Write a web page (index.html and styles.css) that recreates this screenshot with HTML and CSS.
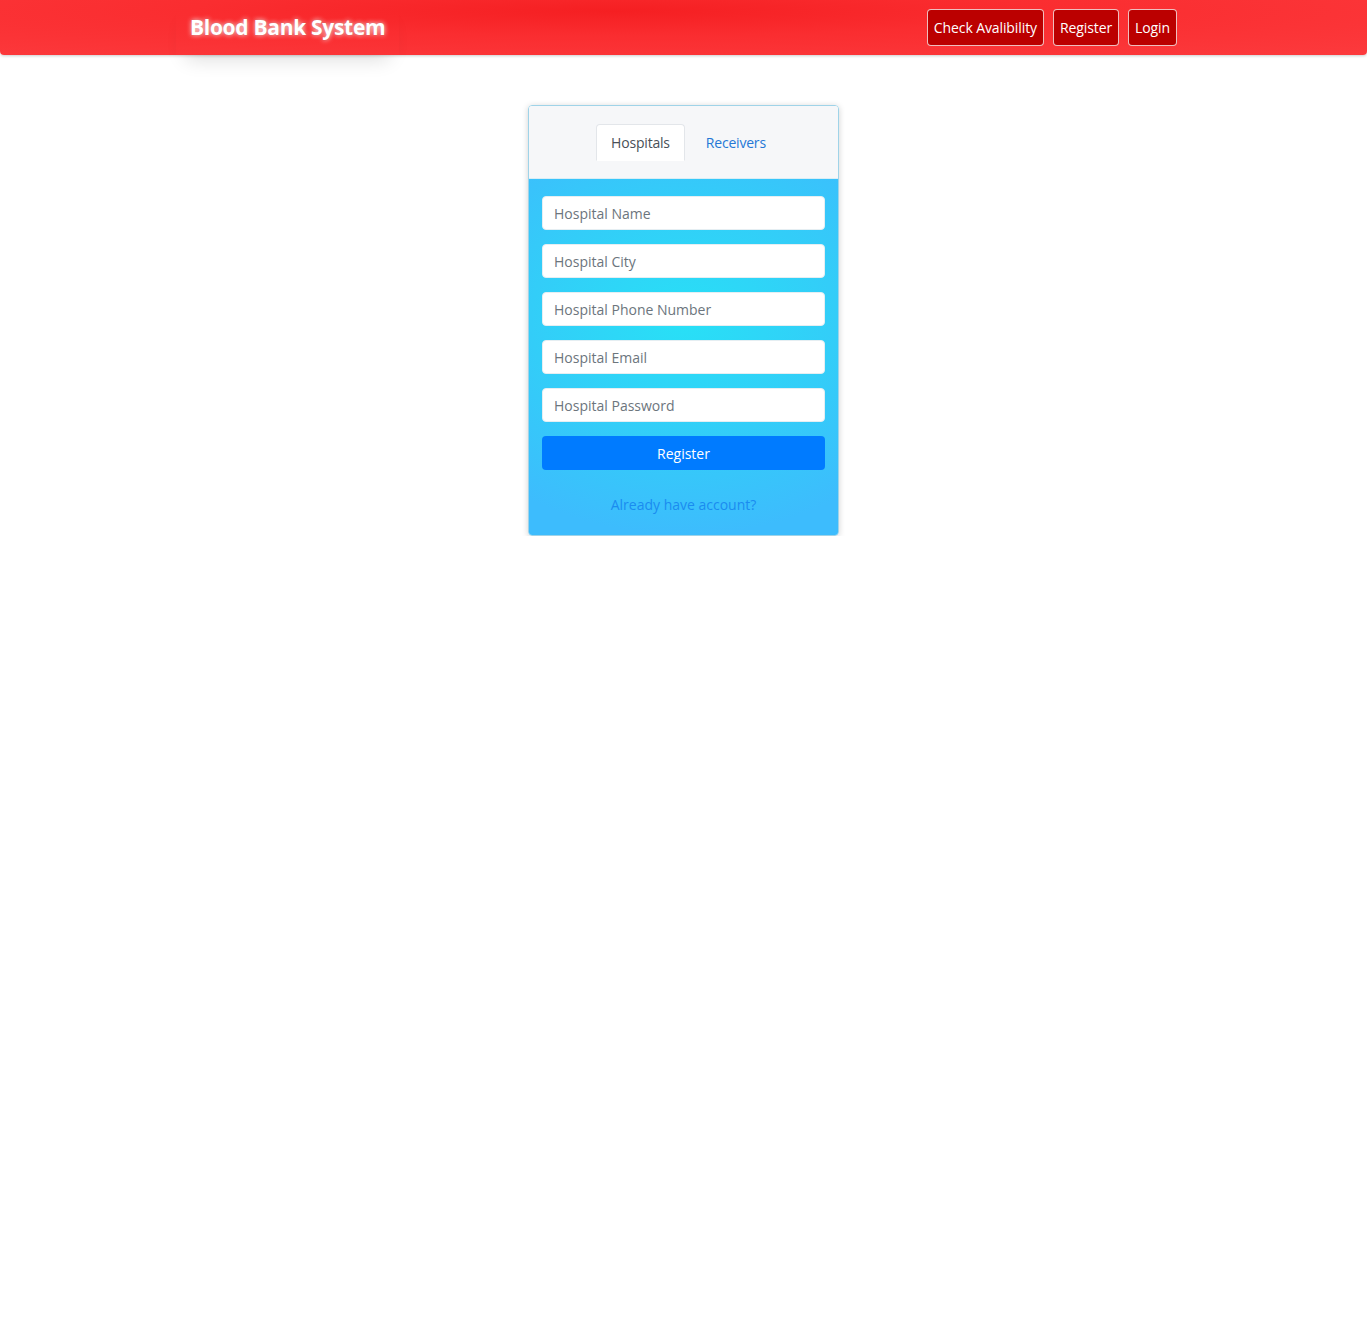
FILE: index.html
```html
<!DOCTYPE html>
<html lang="en">
<head>
<meta charset="utf-8">
<title>Blood Bank System</title>
<link rel="stylesheet" href="styles.css">
</head>
<body>
<nav class="navbar">
  <a class="brand" href="#">Blood Bank System</a>
  <div class="nav-actions">
    <a class="nav-btn" href="#">Check Avalibility</a>
    <a class="nav-btn" href="#">Register</a>
    <a class="nav-btn" href="#">Login</a>
  </div>
</nav>
<main class="page">
  <section class="card">
    <header class="card-header">
      <ul class="tabs">
        <li><a class="tab active" href="#">Hospitals</a></li>
        <li><a class="tab" href="#">Receivers</a></li>
      </ul>
    </header>
    <form class="card-body">
      <input class="field" type="text" placeholder="Hospital Name">
      <input class="field" type="text" placeholder="Hospital City">
      <input class="field" type="text" placeholder="Hospital Phone Number">
      <input class="field" type="email" placeholder="Hospital Email">
      <input class="field" type="password" placeholder="Hospital Password">
      <button class="submit" type="button">Register</button>
      <a class="account-link" href="#">Already have account?</a>
    </form>
  </section>
</main>
</body>
</html>
```
FILE: styles.css
```css
* { box-sizing: border-box; }
body {
  margin: 0;
  font-family: "Open Sans", "Noto Sans", sans-serif;
  font-size: 14px;
  color: #495057;
  background: #fff;
}
.navbar {
  height: 55px;
  display: flex;
  align-items: center;
  justify-content: space-between;
  padding: 0 190px;
  background: radial-gradient(ellipse at 45% 20%, #f51f22 0%, #fa2d30 40%, #fc3a3d 100%);
  border-radius: 0 0 4px 4px;
  box-shadow: 0 1px 3px rgba(0,0,0,0.2);
}
.brand {
  height: 55px;
  display: flex;
  align-items: center;
  margin-left: -14px;
  padding: 0 14px 2px;
  color: #fff;
  font-weight: 700;
  font-size: 21px;
  text-decoration: none;
  letter-spacing: -0.3px;
  text-shadow: 0 0 5px rgba(255,255,255,0.95), 0 0 2px rgba(120,0,0,0.5);
  box-shadow: 0 14px 20px -10px rgba(0,0,0,0.14);
}
.nav-actions { display: flex; gap: 9px; }
.nav-btn {
  display: block;
  height: 37px;
  line-height: 35px;
  padding: 0 6px;
  background: #bb0000;
  color: #fff;
  border: 1px solid rgba(255,255,255,0.75);
  border-radius: 4px;
  text-decoration: none;
  font-size: 14px;
  letter-spacing: -0.1px;
}
.page { display: flex; justify-content: center; padding-top: 50px; }
.card {
  width: 311px;
  border: 1px solid #9fd3e8;
  border-radius: 4px;
  overflow: hidden;
  box-shadow: 0 1px 6px rgba(0,0,0,0.18);
}
.card-header {
  background: #f6f7f9;
  padding: 18px 0 0;
  height: 73px;
  border-bottom: 1px solid #d8eef6;
}
.tabs {
  list-style: none;
  margin: 0;
  padding: 0 0 0 10px;
  display: flex;
  justify-content: center;
  gap: 6px;
}
.tab {
  display: block;
  height: 37px;
  line-height: 36px;
  padding: 0 14px;
  color: #2577d6;
  text-decoration: none;
  border: 1px solid transparent;
  border-radius: 4px 4px 0 0;
  font-size: 14px;
  letter-spacing: -0.2px;
}
.tab.active {
  background: #fff;
  color: #495057;
  border-color: #e3e6ea #e3e6ea #fff;
}
.card-body {
  display: flex;
  flex-direction: column;
  gap: 14px;
  padding: 17px 13px 21px;
  background: radial-gradient(ellipse 90% 60% at 50% 40%, #28e0f6 0%, #33cdf8 55%, #3dbcfd 100%);
}
.field {
  height: 34px;
  width: 100%;
  border: 1px solid #e5eef2;
  border-radius: 4px;
  padding: 0 11px;
  font-family: inherit;
  font-size: 14px;
  color: #495057;
  background: #fff;
}
.field::placeholder { color: #6c757d; }
.submit {
  height: 34px;
  border: none;
  border-radius: 4px;
  background: #007bff;
  color: #fff;
  font-family: inherit;
  font-size: 14px;
}
.account-link {
  text-align: center;
  color: #1a8cf0;
  text-decoration: none;
  font-size: 14px;
  margin-top: 11px;
}
```
